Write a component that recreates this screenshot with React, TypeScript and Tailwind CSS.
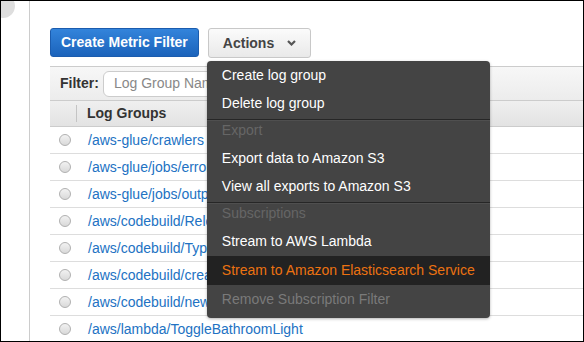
import React from "react"

const logGroups = [
  "/aws-glue/crawlers",
  "/aws-glue/jobs/error",
  "/aws-glue/jobs/output",
  "/aws/codebuild/ReleaseBuild",
  "/aws/codebuild/TypeCheck",
  "/aws/codebuild/create-site",
  "/aws/codebuild/new-project",
  "/aws/lambda/ToggleBathroomLight",
]

type MenuItem =
  | { kind: "item"; label: string; h?: string; active?: boolean; disabled?: boolean }
  | { kind: "header"; label: string }
  | { kind: "sep" }

const menu: MenuItem[] = [
  { kind: "item", label: "Create log group" },
  { kind: "item", label: "Delete log group" },
  { kind: "sep" },
  { kind: "header", label: "Export" },
  { kind: "item", label: "Export data to Amazon S3" },
  { kind: "item", label: "View all exports to Amazon S3" },
  { kind: "sep" },
  { kind: "header", label: "Subscriptions" },
  { kind: "item", label: "Stream to AWS Lambda", h: "h-[29px]" },
  { kind: "item", label: "Stream to Amazon Elasticsearch Service", h: "h-[29px]", active: true },
  { kind: "item", label: "Remove Subscription Filter", disabled: true },
]

function ActionsMenu() {
  return (
    <div className="absolute left-[-1px] top-[33px] z-10 w-[283px] rounded-[4px] bg-[#444444] pb-[5px] shadow-[0_1px_3px_rgba(0,0,0,0.3)]">
      {menu.map((m, idx) => {
        if (m.kind === "sep") {
          return (
            <div key={idx} className="mt-[2px] border-t border-b border-t-[#262626] border-b-[#4f4f4f]" />
          )
        }
        if (m.kind === "header") {
          return (
            <div key={idx} className="h-[23px] px-[15px] pt-[1px] text-[14px] leading-[16px] text-[#666666]">
              {m.label}
            </div>
          )
        }
        return (
          <div
            key={idx}
            className={`flex ${m.h || "h-[28px]"} items-center px-[15px] text-[14px] whitespace-nowrap ${
              m.active ? "bg-[#222222] text-[#ec7211]" : m.disabled ? "text-[#7a7a7a]" : "text-white"
            }`}
          >
            {m.label}
          </div>
        )
      })}
    </div>
  )
}

export default function App() {
  return (
    <div
      className="relative flex h-[342px] w-[584px] overflow-hidden border border-black bg-white"
      style={{ fontFamily: "'Liberation Sans', Arial, sans-serif" }}
    >
      {/* left gutter */}
      <div className="relative w-[29px] shrink-0 border-r border-[#cccccc]">
        <div className="absolute left-[-10px] top-[-7px] h-[24px] w-[24px] rounded-full bg-[#dedede]" />
      </div>

      <div className="flex-1 pl-[20px] pt-[27px]">
        <div className="flex items-start">
          <button className="h-[29px] rounded-[3px] border border-[#1b5cae] bg-gradient-to-b from-[#3384db] to-[#1b63bb] px-[10px] text-[14px] font-bold text-white">
            Create Metric Filter
          </button>
          <div className="relative ml-[9px]">
            <button className="flex h-[30px] items-center rounded-[3px] border border-[#c8c8c8] bg-gradient-to-b from-[#fbfbfb] to-[#e9e9e9] pl-[14px] pr-[14px] text-[14px] font-bold text-[#444444]">
              Actions
              <svg className="ml-[13px]" width="9" height="6" viewBox="0 0 9 6">
                <path d="M1 1 L4.5 4.5 L8 1" fill="none" stroke="#555" strokeWidth="2.2" />
              </svg>
            </button>
            <ActionsMenu />
          </div>
        </div>

        <div className="mt-[8px]">
          {/* filter bar */}
          <div className="flex h-[35px] items-center border-y border-[#cccccc] bg-gradient-to-b from-[#f7f7f7] to-[#ececec] pl-[10px]">
            <span className="text-[14px] font-bold text-[#333333]">Filter:</span>
            <div className="ml-[4px] flex h-[26px] w-[250px] items-center rounded-[6px] border border-[#cccccc] bg-white pl-[10px] text-[14px] text-[#888888]">
              Log Group Name Prefix
            </div>
          </div>

          {/* header */}
          <div className="flex h-[26px] items-center border-b border-[#cccccc] bg-gradient-to-b from-[#efefef] to-[#e3e3e3]">
            <div className="h-[17px] w-[27px] border-r border-[#c4c4c4]" />
            <span className="pl-[10px] text-[14px] font-bold text-[#333333]">Log Groups</span>
          </div>

          {logGroups.map(name => (
            <div key={name} className="flex h-[27px] items-center border-b border-[#dddddd]">
              <div className="flex w-[28px] justify-center pl-[2px]">
                <span className="h-[12px] w-[12px] rounded-full border border-[#b0b0b0] bg-gradient-to-b from-[#f2f2f2] to-[#d9d9d9]" />
              </div>
              <span className="pl-[10px] text-[14px] whitespace-nowrap text-[#2272c3]">{name}</span>
            </div>
          ))}
        </div>
      </div>
    </div>
  )
}
